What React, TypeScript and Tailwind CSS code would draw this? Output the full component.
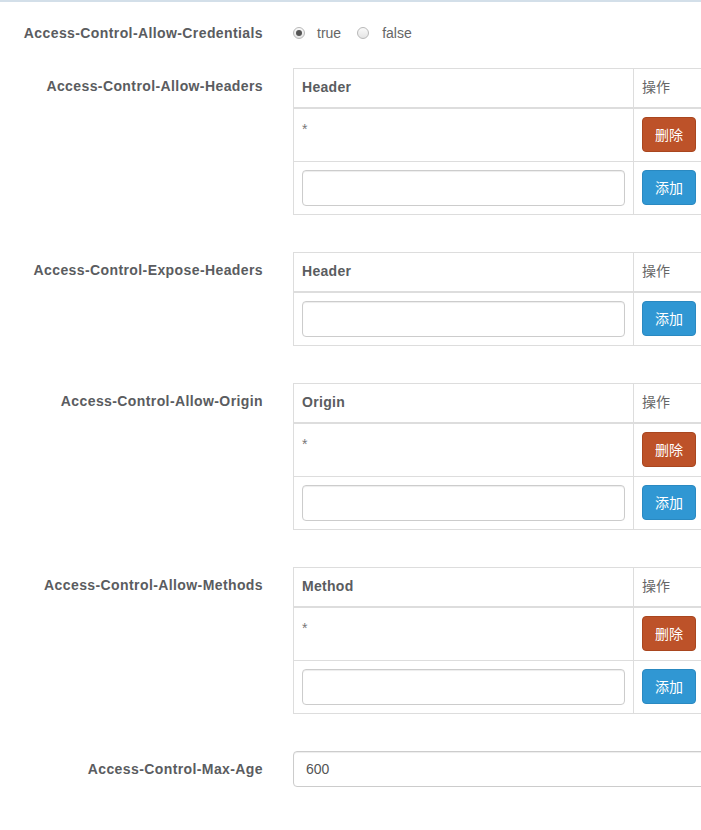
import React from "react";

const font = { fontFamily: '"Liberation Sans", "Noto Sans CJK SC", sans-serif' };

function Label({ children }: { children: React.ReactNode }) {
  return (
    <div className="w-[263px] shrink-0 pt-2 text-right text-[14px] leading-5 font-bold tracking-[0.4px] text-[#5a5c60]">
      {children}
    </div>
  );
}

function Radio({ checked }: { checked?: boolean }) {
  return (
    <span className="flex h-[12px] w-[12px] items-center justify-center rounded-full border border-[#b8b8b8] bg-gradient-to-b from-[#fafafa] to-[#e4e4e4]">
      {checked && <span className="h-[6px] w-[6px] rounded-full bg-[#555]" />}
    </span>
  );
}

function TextInput({ value }: { value?: string }) {
  return (
    <input
      defaultValue={value}
      className="h-[36px] w-full rounded-[4px] border border-[#ccc] px-3 text-[14px] text-[#555] shadow-[inset_0_1px_1px_rgba(0,0,0,0.075)] outline-none"
      style={font}
    />
  );
}

function Btn({ kind, children }: { kind: "del" | "add"; children: React.ReactNode }) {
  const cls =
    kind === "del"
      ? "bg-[#bd5229] border-[#a9461f]"
      : "bg-[#3097d3] border-[#2a89c1]";
  return (
    <button
      className={`h-[35px] w-[54px] rounded-[4px] border text-[14px] leading-5 text-white ${cls}`}
    >
      {children}
    </button>
  );
}

function ListTable({ title, items }: { title: string; items: string[] }) {
  return (
    <div className="w-[413px] border border-[#ddd] text-[14px] leading-5">
      <div className="grid grid-cols-[340px_1fr] border-b-2 border-[#ddd]">
        <div className="h-[38px] border-r border-[#ddd] px-2 pt-2 font-bold tracking-[0.3px] text-[#5a5c60]">{title}</div>
        <div className="h-[38px] px-2 pt-2 text-[#666]">操作</div>
      </div>
      {items.map((it) => (
        <div key={it} className="grid grid-cols-[340px_1fr] border-b border-[#ddd]">
          <div className="h-[52px] border-r border-[#ddd] px-2 pt-[10px] text-[#777]">{it}</div>
          <div className="h-[52px] px-2 pt-2">
            <Btn kind="del">删除</Btn>
          </div>
        </div>
      ))}
      <div className="grid grid-cols-[340px_1fr]">
        <div className="h-[52px] border-r border-[#ddd] px-2 py-2">
          <TextInput />
        </div>
        <div className="h-[52px] px-2 pt-2">
          <Btn kind="add">添加</Btn>
        </div>
      </div>
    </div>
  );
}

export default function App() {
  return (
    <div className="h-[830px] w-[701px] overflow-hidden border-t-2 border-[#d3dfe9] bg-white" style={font}>
      <div className="flex flex-col">
        <div className="mt-[13px] flex gap-[30px]">
          <Label>Access-Control-Allow-Credentials</Label>
          <div className="flex items-center pt-2 text-[14px] leading-5 text-[#666]">
            <Radio checked />
            <span className="ml-[12px]">true</span>
            <span className="ml-[16px]"><Radio /></span>
            <span className="ml-[13px]">false</span>
          </div>
        </div>

        <div className="mt-[25px] flex gap-[30px]">
          <Label>Access-Control-Allow-Headers</Label>
          <ListTable title="Header" items={["*"]} />
        </div>

        <div className="mt-[37px] flex gap-[30px]">
          <Label>Access-Control-Expose-Headers</Label>
          <ListTable title="Header" items={[]} />
        </div>

        <div className="mt-[37px] flex gap-[30px]">
          <Label>Access-Control-Allow-Origin</Label>
          <ListTable title="Origin" items={["*"]} />
        </div>

        <div className="mt-[37px] flex gap-[30px]">
          <Label>Access-Control-Allow-Methods</Label>
          <ListTable title="Method" items={["*"]} />
        </div>

        <div className="mt-[37px] flex gap-[30px]">
          <Label>Access-Control-Max-Age</Label>
          <div className="w-[420px] shrink-0">
            <TextInput value="600" />
          </div>
        </div>
      </div>
    </div>
  );
}
